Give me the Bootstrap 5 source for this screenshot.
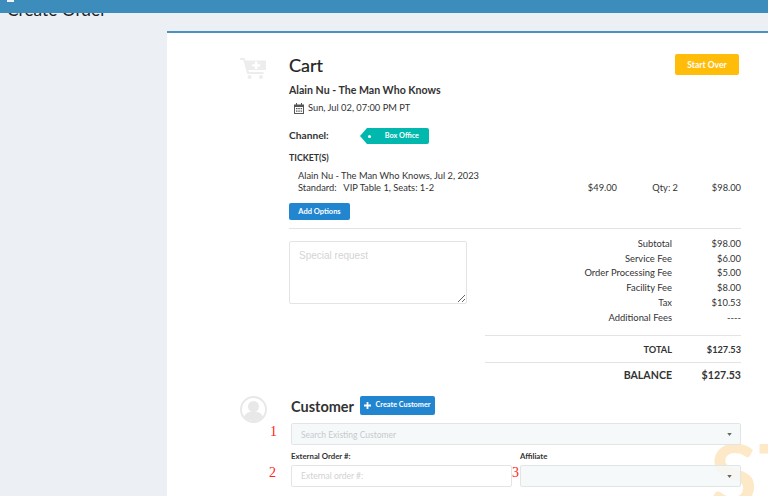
<!DOCTYPE html>
<html lang="en">
<head>
<meta charset="UTF-8">
<title>Create Order</title>
<link href="https://cdn.jsdelivr.net/npm/bootstrap@5.3.0/dist/css/bootstrap.min.css" rel="stylesheet">
<style>
html, body { height: 496px; overflow: hidden; }
body { background: #ecf0f5; font-family: Lato, "Liberation Sans", sans-serif; font-size: 9.4px; color: #333; position: relative; }
.top-strip { position: absolute; top: 0; left: 0; right: 0; height: 13px; background: #3d8dbc; z-index: 3; }
.top-strip i { position: absolute; left: 7px; top: 0; width: 7px; height: 2px; background: #eef3f7; }
.page-title { font-size: 17.3px; line-height: 19px; margin: 0 0 0 7px; height: 31px; color: #222; }
.order-panel { margin-left: 167px; height: 465px; background: #fff; border-top: 2px solid #4a93c0; padding: 21px 27px 0 73px; display: flex; position: relative; overflow: hidden; }
.icon-side { width: 49px; flex: none; padding-top: 3px; }
.main-side { flex: 1; min-width: 0; position: relative; z-index: 1; }
.cart-head { height: 23px; }
.cart-head h2 { font-size: 18px; line-height: 22px; margin: 0; font-weight: 400; color: #222; -webkit-text-stroke: .2px #222; }
.btn-over { background: #ffbd0a; color: #fff; font-size: 8.5px; font-weight: 700; width: 64px; height: 21px; padding: 1px 0 0; border: 0; border-radius: 2px; margin-right: 2px; }
.ev-name { font-size: 10.6px; line-height: 15px; font-weight: 700; margin-top: 6px; color: #333; }
.ev-date { font-size: 9.3px; line-height: 14px; margin-top: 3px; padding-left: 5px; display: flex; align-items: center; gap: 4px; }
.chan-row { margin-top: 13px; height: 16px; font-size: 10.2px; font-weight: 700; }
.chan-row span.lbl { width: 71px; }
.chan-tag { width: 69px; height: 16px; background: #00b8ad; color: #fff; font-size: 7.3px; font-weight: 700; display: flex; align-items: center; justify-content: flex-end; padding-right: 10px; border-radius: 0 2px 2px 0; clip-path: polygon(7px 0, 100% 0, 100% 100%, 7px 100%, 0 50%); position: relative; }
.chan-tag::before { content: ""; position: absolute; left: 8px; top: 6.500px; width: 3px; height: 3px; border-radius: 50%; background: #fff; }
.tick-lbl { font-size: 8.8px; line-height: 12px; font-weight: 700; margin-top: 8px; }
.tick-line { margin-top: 6px; padding-left: 9px; font-size: 9.300px; line-height: 12px; }
.tick-line .t-price { width: 50px; text-align: right; }
.tick-line .t-qty { width: 61px; text-align: right; }
.tick-line .t-sum { width: 63px; text-align: right; }
.btn-opt { background: #2185d0; color: #fff; font-size: 7.5px; font-weight: 700; width: 61px; height: 17px; padding: 0; border: 0; border-radius: 2px; display: block; margin-top: 9px; }
.thin-rule { border: 0; border-top: 1px solid #e3e3e3; opacity: 1; margin: 8px 0 0; }
.req-box { width: 178px; height: 63px; font-size: 10px; padding: 6px 9px; border: 1px solid #e4e4e4; border-radius: 2px; font-family: "Liberation Sans", sans-serif; margin-top: 12px; flex: none; }
.req-box::placeholder { color: #d4d4d4; }
.sum-side { width: 256px; padding-top: 8px; }
.sum-row { display: flex; justify-content: flex-end; line-height: 14.7px; }
.sum-row .s-val { width: 69px; text-align: right; }
.sum-total { border-top: 1px solid #e3e3e3; font-weight: 700; height: 27px; line-height: 27px; font-size: 9.2px; }
.sum-bal { border-top: 1px solid #e3e3e3; font-weight: 700; height: 27px; line-height: 25px; font-size: 10.6px; }
.sum-gap { height: 10px; }
.cust-block { position: absolute; left: -49px; right: 0; top: 342px; }
.cust-head { height: 27px; }
.cust-avatar { margin-right: 22px; flex: none; }
.cust-head h3 { font-size: 14.5px; font-weight: 700; margin: 0 6px 0 2px; color: #333; line-height: 21px; }
.btn-cust { background: #2185d0; color: #fff; font-size: 7.3px; font-weight: 700; width: 75px; height: 19px; padding: 0; border: 0; border-radius: 2px; display: flex; align-items: center; justify-content: center; gap: 4px; }
.cust-fields { padding-left: 51px; }
.f-sel { height: 22px; min-height: 0; font-size: 8.5px; padding: 1px 9px 0; line-height: 20px; background-color: rgba(245,248,249,.85); border: 1px solid #e2e5e6; border-radius: 2px; color: #c6c9cb; background-image: url("data:image/svg+xml,%3Csvg xmlns='http://www.w3.org/2000/svg' viewBox='0 0 6 4'%3E%3Cpath d='M0 0h6L3 4z' fill='%23666'/%3E%3C/svg%3E"); background-size: 5px 3px; background-position: right 8px center; }
.f-inp { height: 22px; min-height: 0; font-size: 8.5px; padding: 0 9px; border: 1px solid #e2e5e6; border-radius: 2px; background: #fff; }
.f-inp::placeholder { color: #d0d2d4; }
.f-label { font-size: 7.8px; line-height: 11px; font-weight: 700; margin: 0 0 3px; display: block; }
.f-row { display: flex; gap: 8px; margin-top: 6px; }
.f-row > div { width: 221px; }
.red-num { position: absolute; font-family: "Liberation Serif", serif; color: #f22; font-size: 14px; line-height: 16px; }
.num-a { left: 30px; top: 28px; }
.num-b { left: 29px; top: 69px; }
.num-c { left: 272px; top: 69px; }
.wm-letter { position: absolute; left: 543px; top: 397px; font-size: 86px; line-height: 86px; font-weight: 700; color: #fde9c8; letter-spacing: 1px; white-space: nowrap; }
</style>
</head>
<body>
<div class="top-strip"><i></i></div>
<div class="page-title">Create Order</div>
<div class="order-panel">
    <div class="wm-letter">ST</div>
    <div class="icon-side">
        <svg width="26" height="22" viewBox="0 0 26 22" fill="#ededed">
            <path d="M0 1h4.500l1 2.600H26v9.400H8.400l.5 2H23.500v2H7.200L3.300 3H0z"/>
            <circle cx="9.500" cy="20" r="2"/><circle cx="21" cy="20" r="2"/>
            <path d="M15 4.500h2.400v2.800h2.800v2.200h-2.800v2.500H15V9.500h-2.800V7.300H15z" fill="#fff"/>
        </svg>
    </div>
    <div class="main-side">
        <div class="cart-head d-flex justify-content-between align-items-start">
            <h2>Cart</h2>
            <button class="btn btn-over" type="button">Start Over</button>
        </div>
        <div class="ev-name">Alain Nu - The Man Who Knows</div>
        <div class="ev-date">
            <svg width="10" height="11" viewBox="0 0 10 11" fill="#555"><path d="M2 0h1v1.500h4V0h1v1.500h2V11H0V1.500h2zM1 4v6h8V4z"/><path d="M2 5h1.500v1.200H2zm2.300 0h1.500v1.200H4.300zm2.300 0h1.500v1.200H6.600zM2 7.500h1.500v1.200H2zm2.300 0h1.500v1.200H4.300zm2.300 0h1.500v1.200H6.600z"/></svg>
            <span>Sun, Jul 02, 07:00 PM PT</span>
        </div>
        <div class="chan-row d-flex align-items-center">
            <span class="lbl">Channel:</span>
            <span class="chan-tag">Box Office</span>
        </div>
        <div class="tick-lbl">TICKET(S)</div>
        <div class="tick-line d-flex align-items-end">
            <div class="flex-grow-1">Alain Nu - The Man Who Knows, Jul 2, 2023<br>Standard:&nbsp;&nbsp;&nbsp;VIP Table 1, Seats: 1-2</div>
            <div class="t-price">$49.00</div>
            <div class="t-qty">Qty: 2</div>
            <div class="t-sum">$98.00</div>
        </div>
        <button class="btn btn-opt" type="button">Add Options</button>
        <hr class="thin-rule">
        <div class="d-flex justify-content-between">
            <textarea class="form-control req-box" placeholder="Special request"></textarea>
            <div class="sum-side">
                <div class="sum-row"><span>Subtotal</span><span class="s-val">$98.00</span></div>
                <div class="sum-row"><span>Service Fee</span><span class="s-val">$6.00</span></div>
                <div class="sum-row"><span>Order Processing Fee</span><span class="s-val">$5.00</span></div>
                <div class="sum-row"><span>Facility Fee</span><span class="s-val">$8.00</span></div>
                <div class="sum-row"><span>Tax</span><span class="s-val">$10.53</span></div>
                <div class="sum-row"><span>Additional Fees</span><span class="s-val">----</span></div>
                <div class="sum-gap"></div>
                <div class="sum-row sum-total"><span>TOTAL</span><span class="s-val">$127.53</span></div>
                <div class="sum-row sum-bal"><span>BALANCE</span><span class="s-val">$127.53</span></div>
            </div>
        </div>
        <div class="cust-block">
            <div class="cust-head d-flex align-items-start">
                <svg class="cust-avatar" width="27" height="27" viewBox="0 0 27 27"><circle cx="13.500" cy="13.500" r="12.500" fill="#fff" stroke="#e8e8e8" stroke-width="2"/><circle cx="13.500" cy="10.500" r="5.500" fill="#e8e8e8"/><path d="M4 21c1.500-4 5-5.500 9.500-5.500S21.500 17 23 21c-2.500 2.500-6 4-9.500 4S6.500 23.500 4 21z" fill="#e8e8e8"/></svg>
                <h3>Customer</h3>
                <button class="btn btn-cust" type="button">
                    <svg width="7" height="7" viewBox="0 0 7 7" fill="#fff"><path d="M2.600 0h1.800v2.600H7v1.800H4.400V7H2.600V4.400H0V2.600h2.600z"/></svg>
                    <span>Create Customer</span>
                </button>
            </div>
            <div class="cust-fields">
                <select class="form-select f-sel"><option>Search Existing Customer</option></select>
                <div class="f-row">
                    <div><label class="f-label">External Order #:</label><input class="form-control f-inp" placeholder="External order #:"></div>
                    <div><label class="f-label">Affiliate</label><select class="form-select f-sel"><option></option></select></div>
                </div>
            </div>
            <span class="red-num num-a">1</span>
            <span class="red-num num-b">2</span>
            <span class="red-num num-c">3</span>
        </div>
    </div>
</div>
<script src="https://cdn.jsdelivr.net/npm/bootstrap@5.3.0/dist/js/bootstrap.bundle.min.js"></script>
</body>
</html>
